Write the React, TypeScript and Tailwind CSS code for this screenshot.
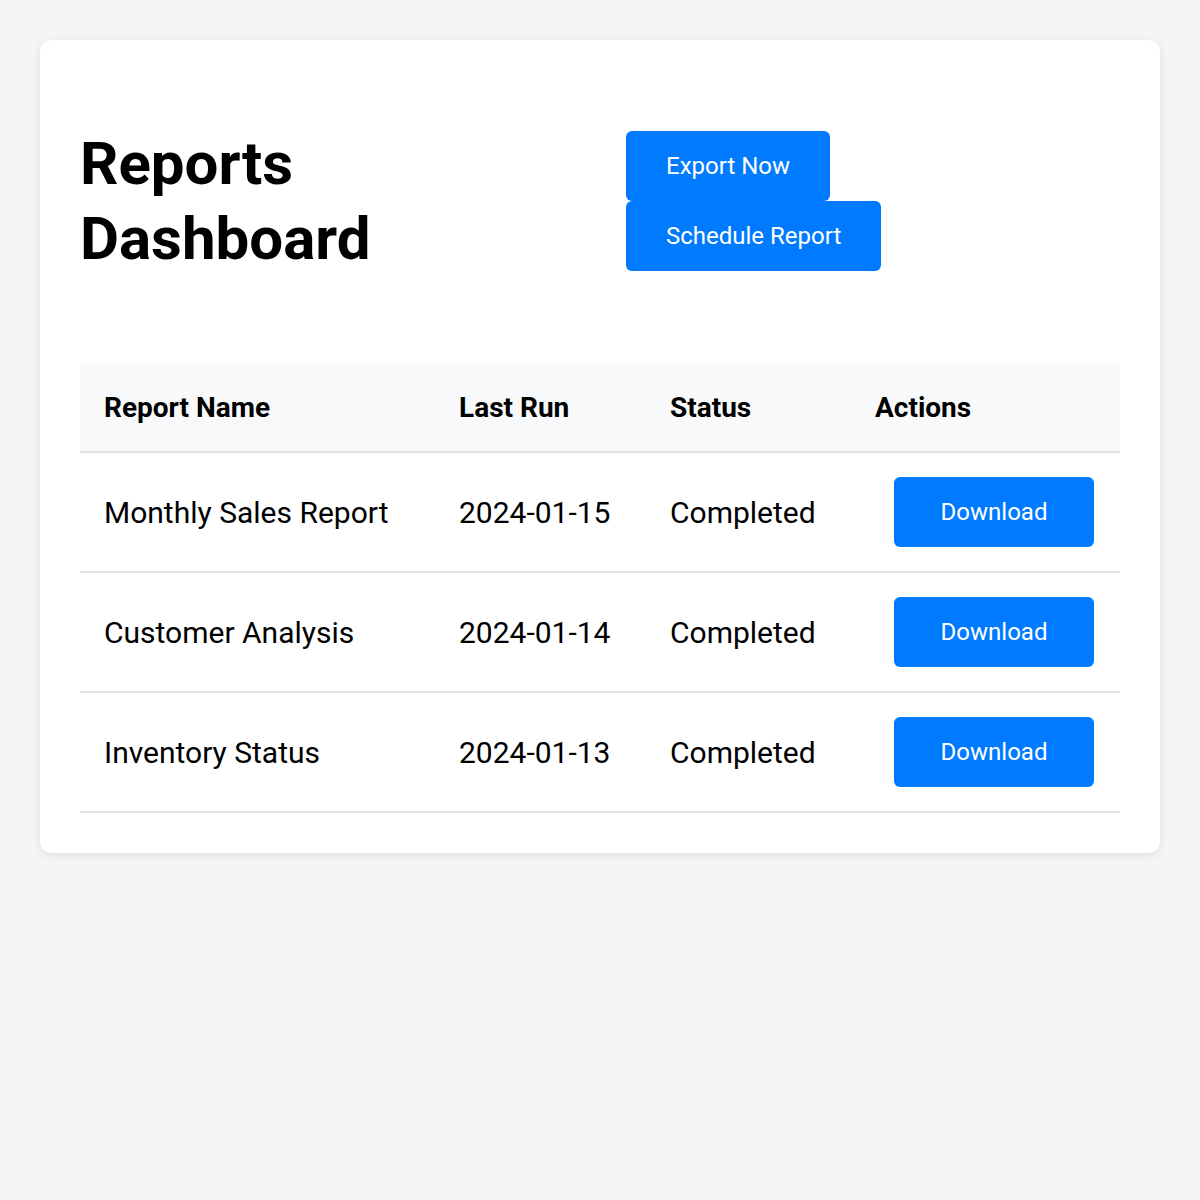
const rows = [
  { name: "Monthly Sales Report", date: "2024-01-15", status: "Completed" },
  { name: "Customer Analysis", date: "2024-01-14", status: "Completed" },
  { name: "Inventory Status", date: "2024-01-13", status: "Completed" },
];

export default function App() {
  return (
    <div className="min-h-[1200px] bg-[#f5f5f5] p-10 font-[Roboto] text-black">
      <div className="rounded-xl bg-white p-10 shadow-[0_2px_8px_rgba(0,0,0,0.1)]">
        <div className="mb-[46px] flex items-center pt-[46px] pb-[42px]">
          <h1 className="w-[546px] text-[60px] font-bold leading-[75px]">
            Reports
            <br />
            Dashboard
          </h1>
          <div className="flex flex-col items-start">
            <button className="h-[70px] rounded-md bg-[#007bff] px-10 text-[24px] text-white">Export Now</button>
            <button className="h-[70px] rounded-md bg-[#007bff] px-10 text-[24px] text-white">Schedule Report</button>
          </div>
        </div>
        <table className="w-full border-collapse text-left">
          <thead>
            <tr className="h-[88px] border-b-2 border-[#dee2e6] bg-[#f8f9fa] text-[28px] font-bold">
              <th className="w-[355px] px-6">Report Name</th>
              <th className="w-[211px] px-6">Last Run</th>
              <th className="w-[205px] px-6">Status</th>
              <th className="px-6">Actions</th>
            </tr>
          </thead>
          <tbody className="text-[30px]">
            {rows.map((r) => (
              <tr key={r.name} className="h-[120px] border-b-2 border-[#e2e2e2]">
                <td className="px-6">{r.name}</td>
                <td className="px-6">{r.date}</td>
                <td className="px-6">{r.status}</td>
                <td className="px-6">
                  <button className="ml-[19px] h-[70px] w-[200px] rounded-md bg-[#007bff] text-[24px] text-white">Download</button>
                </td>
              </tr>
            ))}
          </tbody>
        </table>
      </div>
    </div>
  );
}
